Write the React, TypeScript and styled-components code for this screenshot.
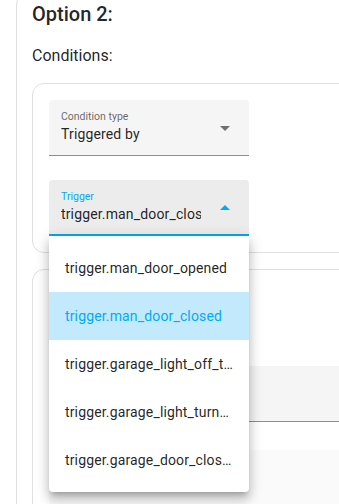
import React from 'react';
import styled, { createGlobalStyle } from 'styled-components';

const GlobalStyle = createGlobalStyle`
  html, body {
    margin: 0;
    padding: 0;
    background: #ffffff;
    overflow: hidden;
  }
  body {
    font-family: Roboto, 'Noto Sans', 'Liberation Sans', sans-serif;
    color: rgba(0, 0, 0, 0.87);
    -webkit-font-smoothing: antialiased;
  }
  #root {
    width: 339px;
    height: 504px;
    overflow: hidden;
  }
`;

const Page = styled.div`
  width: 460px;
`;

const OptionCard = styled.div`
  margin: -7px 0 0 16px;
  padding: 6px 15px 16px 15px;
  border: 1px solid #e0e0e0;
  border-radius: 12px;
  background: #fff;
`;

const Title = styled.h2`
  margin: 0;
  font-size: 20px;
  font-weight: 500;
  line-height: 28px;
  color: rgba(0, 0, 0, 0.87);
`;

const SectionLabel = styled.div`
  margin: 16px 0 15px;
  font-size: 16px;
  line-height: 24px;
`;

const ConditionCard = styled.div`
  padding: 16px;
  border: 1px solid #e0e0e0;
  border-radius: 12px;
  display: flex;
  flex-direction: column;
  gap: 24px;

  & + & {
    margin-top: 16px;
  }
`;

const SelectWrap = styled.div`
  position: relative;
  width: 200px;
`;

const SelectBox = styled.div<{ $open?: boolean }>`
  box-sizing: border-box;
  width: 200px;
  height: 56px;
  padding: 0 12px;
  display: flex;
  align-items: center;
  gap: 12px;
  background: ${({ $open }) => ($open ? '#ececec' : '#f5f5f5')};
  border-radius: 4px 4px 0 0;
  border-bottom: ${({ $open }) =>
    $open ? '2px solid #03a9f4' : '1px solid rgba(0, 0, 0, 0.42)'};
`;

const SelectText = styled.div`
  flex: 1;
  min-width: 0;
  align-self: stretch;
  padding-top: 11px;
`;

const FloatLabel = styled.div<{ $open?: boolean }>`
  font-size: 10.5px;
  line-height: 12px;
  color: ${({ $open }) => ($open ? '#03a9f4' : 'rgba(0, 0, 0, 0.6)')};
`;

const SelectValue = styled.div`
  margin-top: 1px;
  font-size: 14px;
  line-height: 20px;
  letter-spacing: 0.15px;
  white-space: nowrap;
  overflow: hidden;
`;

const Arrow = styled.svg<{ $open?: boolean }>`
  flex: none;
  width: 24px;
  height: 24px;
  fill: ${({ $open }) => ($open ? '#03a9f4' : 'rgba(0, 0, 0, 0.54)')};
`;

const Menu = styled.ul`
  position: absolute;
  top: 100%;
  left: 0;
  z-index: 5;
  width: 200px;
  margin: 0;
  padding: 8px 0;
  list-style: none;
  background: #fff;
  border-radius: 0 0 4px 4px;
  box-shadow: 0 5px 5px -3px rgba(0, 0, 0, 0.2), 0 8px 10px 1px rgba(0, 0, 0, 0.14),
    0 3px 14px 2px rgba(0, 0, 0, 0.12);
`;

const MenuItem = styled.li<{ $selected?: boolean }>`
  height: 48px;
  padding: 0 16px;
  line-height: 48px;
  font-size: 14px;
  letter-spacing: 0.15px;
  white-space: nowrap;
  overflow: hidden;
  text-overflow: ellipsis;
  color: ${({ $selected }) => ($selected ? '#03a9f4' : 'rgba(0, 0, 0, 0.87)')};
  background: ${({ $selected }) => ($selected ? 'rgba(3, 169, 244, 0.24)' : 'transparent')};
`;

const FieldStack = styled.div`
  display: flex;
  flex-direction: column;
  gap: 28px;
`;

const TextField = styled.div<{ $disabled?: boolean }>`
  box-sizing: border-box;
  height: 56px;
  background: ${({ $disabled }) => ($disabled ? '#fafafa' : '#f5f5f5')};
  border-radius: 4px 4px 0 0;
  border-bottom: 1px solid
    ${({ $disabled }) => ($disabled ? 'rgba(0, 0, 0, 0.06)' : 'rgba(0, 0, 0, 0.42)')};
`;

const triggers = [
  'trigger.man_door_opened',
  'trigger.man_door_closed',
  'trigger.garage_light_off_timeout',
  'trigger.garage_light_turned_on',
  'trigger.garage_door_closed',
];

type SelectProps = {
  label?: string;
  value?: string;
  open?: boolean;
  children?: React.ReactNode;
};

const Select: React.FC<SelectProps> = ({ label, value, open, children }) => (
  <SelectWrap>
    <SelectBox $open={open}>
      <SelectText>
        {label && <FloatLabel $open={open}>{label}</FloatLabel>}
        {value && <SelectValue>{value}</SelectValue>}
      </SelectText>
      <Arrow $open={open} viewBox="0 0 24 24">
        <path d={open ? 'M7 15l5-5 5 5z' : 'M7 10l5 5 5-5z'} />
      </Arrow>
    </SelectBox>
    {children}
  </SelectWrap>
);

export default function App() {
  return (
    <Page>
      <GlobalStyle />
      <OptionCard>
        <Title>Option 2:</Title>
        <SectionLabel>Conditions:</SectionLabel>

        <ConditionCard>
          <Select label="Condition type" value="Triggered by" />
          <Select label="Trigger" value="trigger.man_door_closed" open>
            <Menu>
              {triggers.map((t) => (
                <MenuItem key={t} $selected={t === 'trigger.man_door_closed'}>
                  {t}
                </MenuItem>
              ))}
            </Menu>
          </Select>
        </ConditionCard>

        {/* second condition, mostly hidden behind the open menu */}
        <ConditionCard>
          <Select />
          <FieldStack>
            <TextField />
            <TextField $disabled />
          </FieldStack>
        </ConditionCard>
      </OptionCard>
    </Page>
  );
}
